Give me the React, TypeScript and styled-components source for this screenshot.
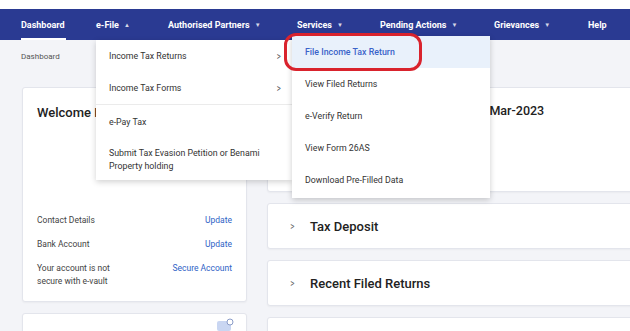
import React from "react";
import styled, { createGlobalStyle } from "styled-components";

const GlobalStyle = createGlobalStyle`
  html, body { margin: 0; padding: 0; }
  body {
    background: #f3f4f8;
    font-family: Roboto, "Liberation Sans", Arial, sans-serif;
    overflow: hidden;
    width: 630px;
    height: 331px;
  }
  * { box-sizing: border-box; }
`;

const Page = styled.div`
  position: relative;
  width: 630px;
  height: 331px;
  overflow: hidden;
`;

const TopStrip = styled.div`
  height: 9px;
  background: #ffffff;
`;

const NavBar = styled.nav`
  height: 31px;
  background: #2a3a92;
  display: flex;
  align-items: center;
  padding-left: 21px;
`;

const NavItem = styled.div<{ $w?: number; $active?: boolean }>`
  position: relative;
  width: ${(p) => (p.$w ? `${p.$w}px` : "auto")};
  flex: none;
  height: 31px;
  display: flex;
  align-items: center;
  color: #ffffff;
  font-size: 9px;
  font-weight: 700;
  white-space: nowrap;
  &::after {
    content: "";
    display: ${(p) => (p.$active ? "block" : "none")};
    position: absolute;
    left: 0;
    width: 45px;
    bottom: 0;
    height: 2px;
    background: #ffffff;
  }
`;

const Caret = styled.span`
  font-size: 6px;
  margin-left: 5px;
  opacity: 0.8;
`;

const Main = styled.div`
  padding: 12px 0 0 22px;
`;

const Crumb = styled.div`
  font-size: 8px;
  color: #555;
  height: 10px;
  line-height: 10px;
  margin-left: -1px;
`;

const Grid = styled.div`
  display: grid;
  grid-template-columns: 225px 400px;
  column-gap: 20px;
  margin-top: 25px;
`;

const Column = styled.div<{ $gap: number }>`
  display: flex;
  flex-direction: column;
  gap: ${(p) => p.$gap}px;
`;

const Card = styled.div<{ $h: number }>`
  background: #ffffff;
  border: 1px solid #e3e5ec;
  border-radius: 3px;
  height: ${(p) => p.$h}px;
  box-shadow: 0 1px 2px rgba(0, 0, 0, 0.04);
`;

const WelcomeCard = styled(Card)`
  padding: 17px 14px 0 14px;
  display: flex;
  flex-direction: column;
`;

const Welcome = styled.div`
  font-size: 13px;
  font-weight: 500;
  color: #222;
  white-space: nowrap;
  height: 16px;
  line-height: 16px;
`;

const InfoList = styled.div`
  margin-top: 93px;
  display: flex;
  flex-direction: column;
  gap: 11px;
`;

const InfoRow = styled.div`
  display: flex;
  justify-content: space-between;
  align-items: flex-start;
  font-size: 8.5px;
  line-height: 13px;
  color: #444;
`;

const LinkText = styled.span`
  color: #2f62c6;
  font-size: 8.5px;
`;

const SmallCard = styled(Card)`
  position: relative;
`;

const CardIcon = styled.div`
  position: absolute;
  right: 12px;
  top: 3px;
`;

const DateCard = styled(Card)`
  padding: 15px 0 0 168px;
`;

const DateText = styled.div`
  font-size: 12.5px;
  font-weight: 500;
  color: #222;
  line-height: 16px;
`;

const SectionCard = styled(Card)`
  display: flex;
  align-items: center;
  padding-left: 20px;
`;

const Chevron = styled.span`
  color: #666;
  font-size: 10px;
  width: 22px;
  transform: scaleX(0.8);
`;

const SectionTitle = styled.span`
  font-size: 13px;
  font-weight: 500;
  color: #222;
`;

const Dropdown = styled.div`
  position: absolute;
  left: 96px;
  top: 40px;
  width: 196px;
  background: #ffffff;
  box-shadow: 0 2px 6px rgba(0, 0, 0, 0.18);
  z-index: 5;
`;

const DropItem = styled.div<{ $h: number; $sep?: boolean }>`
  height: ${(p) => p.$h}px;
  display: flex;
  align-items: center;
  justify-content: space-between;
  padding: 0 10px 0 13px;
  font-size: 8.8px;
  line-height: 13px;
  color: #333;
  border-bottom: ${(p) => (p.$sep ? "1px solid #ebebeb" : "none")};
`;

const ItemArrow = styled.span`
  font-size: 11px;
  color: #555;
  transform: scaleX(0.7);
`;

const SubMenu = styled.div`
  position: absolute;
  left: 292px;
  top: 36px;
  width: 198px;
  background: #ffffff;
  box-shadow: 0 2px 6px rgba(0, 0, 0, 0.2);
  padding-bottom: 2px;
  z-index: 6;
`;

const SubItem = styled.div<{ $active?: boolean }>`
  height: 32px;
  display: flex;
  align-items: center;
  padding-left: 13px;
  font-size: 8.8px;
  color: ${(p) => (p.$active ? "#3a63c9" : "#333")};
  font-weight: ${(p) => (p.$active ? 500 : 400)};
  background: ${(p) => (p.$active ? "#e9f1fb" : "#ffffff")};
`;

const Annotation = styled.div`
  position: absolute;
  left: 284px;
  top: 33px;
  width: 138px;
  height: 38px;
  border: 3px solid #d9232d;
  border-radius: 12px;
  z-index: 7;
  pointer-events: none;
`;

export default function App() {
  return (
    <>
      <GlobalStyle />
      <Page>
        <TopStrip />
        <NavBar>
          <NavItem $w={75} $active>Dashboard</NavItem>
          <NavItem $w={72}>
            e-File<Caret>▲</Caret>
          </NavItem>
          <NavItem $w={129}>
            Authorised Partners<Caret>▼</Caret>
          </NavItem>
          <NavItem $w={83}>
            Services<Caret>▼</Caret>
          </NavItem>
          <NavItem $w={114}>
            Pending Actions<Caret>▼</Caret>
          </NavItem>
          <NavItem $w={94}>
            Grievances<Caret>▼</Caret>
          </NavItem>
          <NavItem>Help</NavItem>
        </NavBar>

        <Main>
          <Crumb>Dashboard</Crumb>
          <Grid>
            <Column $gap={11}>
              <WelcomeCard $h={215}>
                <Welcome>Welcome Back, User</Welcome>
                <InfoList>
                  <InfoRow>
                    <span>Contact Details</span>
                    <LinkText>Update</LinkText>
                  </InfoRow>
                  <InfoRow>
                    <span>Bank Account</span>
                    <LinkText>Update</LinkText>
                  </InfoRow>
                  <InfoRow>
                    <span>
                      Your account is not
                      <br />
                      secure with e-vault
                    </span>
                    <LinkText>Secure Account</LinkText>
                  </InfoRow>
                </InfoList>
              </WelcomeCard>
              <SmallCard $h={60}>
                <CardIcon>
                  <svg width="18" height="14" viewBox="0 0 18 14">
                    <rect x="1" y="3" width="14" height="10" rx="2" fill="#c9d6f2" />
                    <circle cx="14" cy="4" r="3" fill="#ffffff" stroke="#8a9cc8" strokeWidth="1" />
                  </svg>
                </CardIcon>
              </SmallCard>
            </Column>
            <Column $gap={11}>
              <DateCard $h={105}>
                <DateText>As on 31-Mar-2023</DateText>
              </DateCard>
              <SectionCard $h={46}>
                <Chevron>&gt;</Chevron>
                <SectionTitle>Tax Deposit</SectionTitle>
              </SectionCard>
              <SectionCard $h={46}>
                <Chevron>&gt;</Chevron>
                <SectionTitle>Recent Filed Returns</SectionTitle>
              </SectionCard>
              <SectionCard $h={46} />
            </Column>
          </Grid>
        </Main>

        <Dropdown>
          <DropItem $h={33}>
            <span>Income Tax Returns</span>
            <ItemArrow>&gt;</ItemArrow>
          </DropItem>
          <DropItem $h={32} $sep>
            <span>Income Tax Forms</span>
            <ItemArrow>&gt;</ItemArrow>
          </DropItem>
          <DropItem $h={35}>
            <span>e-Pay Tax</span>
          </DropItem>
          <DropItem $h={40}>
            <span>
              Submit Tax Evasion Petition or Benami
              <br />
              Property holding
            </span>
          </DropItem>
        </Dropdown>

        <SubMenu>
          <SubItem $active>File Income Tax Return</SubItem>
          <SubItem>View Filed Returns</SubItem>
          <SubItem>e-Verify Return</SubItem>
          <SubItem>View Form 26AS</SubItem>
          <SubItem>Download Pre-Filled Data</SubItem>
        </SubMenu>

        <Annotation />
      </Page>
    </>
  );
}
